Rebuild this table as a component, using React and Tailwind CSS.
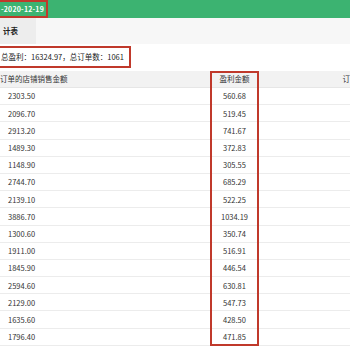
const rows = [
  ['2303.50', '560.68'],
  ['2096.70', '519.45'],
  ['2913.20', '741.67'],
  ['1489.30', '372.83'],
  ['1148.90', '305.55'],
  ['2744.70', '685.29'],
  ['2139.10', '522.25'],
  ['3886.70', '1034.19'],
  ['1300.60', '350.74'],
  ['1911.00', '516.91'],
  ['1845.90', '446.54'],
  ['2594.60', '630.81'],
  ['2129.00', '547.73'],
  ['1635.60', '428.50'],
  ['1796.40', '471.85'],
]

const font = { fontFamily: '"Noto Sans CJK SC", "Noto Sans", sans-serif' }

export default function App() {
  return (
    <div className="h-[350px] w-[350px] overflow-hidden bg-white text-[7.5px] text-[#333]" style={font}>
      {/* top bar */}
      <div className="flex h-[18px] items-center bg-[#3cb371]">
        <div className="flex h-[18px] items-center whitespace-nowrap border-2 border-l-0 border-[#c0392b] pl-[1px] pr-[2px] text-[7px] font-bold tracking-[0.2px] text-white">
          -2020-12-19
        </div>
      </div>

      {/* tabs */}
      <div className="flex h-[26px] bg-[#f7f7f7]">
        <div className="flex w-[36px] items-center bg-[#ededed] pl-[3px] font-bold text-[#222]">计表</div>
      </div>

      {/* summary */}
      <div className="pt-[2px]">
        <div className="flex h-[22px] w-[131px] items-center whitespace-nowrap border-2 border-l-0 border-[#c0392b] pl-[1px] text-[#222]">
          总盈利：16324.97，总订单数：1061
        </div>
      </div>

      {/* table */}
      <div className="relative mt-[3px]">
        <div className="grid h-[17px] grid-cols-[210px_49px_1fr] items-center border-b border-[#e6e6e6] bg-[#f2f2f2]">
          <div>订单的店铺销售金额</div>
          <div className="text-center">盈利金额</div>
          <div className="text-right">订</div>
        </div>
        {rows.map(([sale, profit]) => (
          <div key={sale} className="grid h-[17.2px] grid-cols-[210px_49px_1fr] items-center border-b border-[#ececec]">
            <div className="pl-[8px]">{sale}</div>
            <div className="text-center">{profit}</div>
            <div />
          </div>
        ))}
        <div className="absolute left-[210px] top-0 h-[275px] w-[49px] border-2 border-[#c0392b]" />
      </div>
    </div>
  )
}
